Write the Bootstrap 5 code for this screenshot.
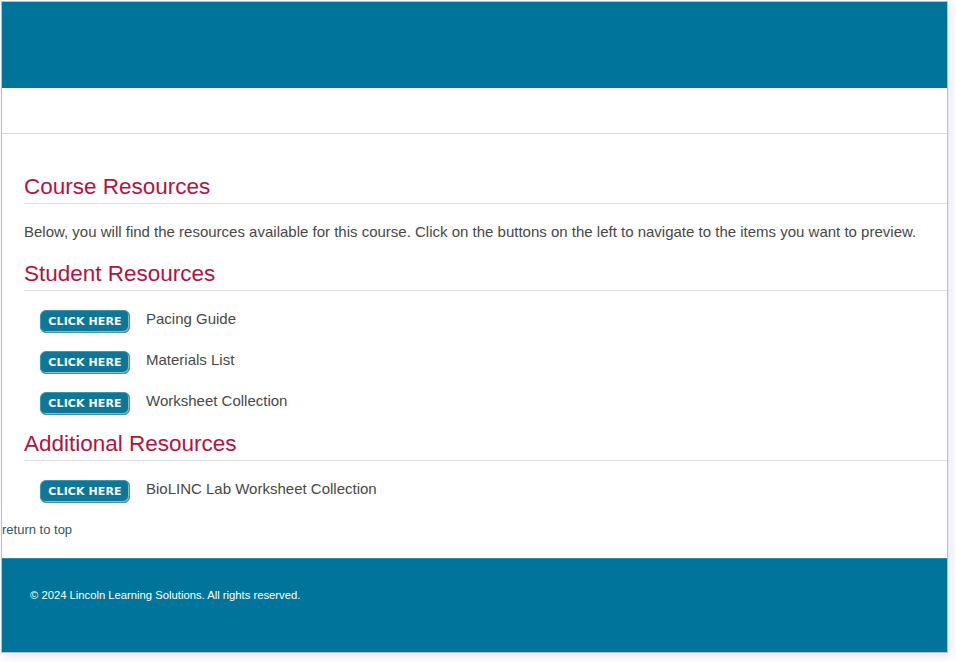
<!DOCTYPE html>
<html lang="en">
<head>
<meta charset="utf-8">
<title>Course Resources</title>
<link rel="stylesheet" href="https://cdn.jsdelivr.net/npm/bootstrap@5.3.0/dist/css/bootstrap.min.css">
<style>
html,body{height:100%;background:#fff;overflow:hidden}
body{font-family:"Liberation Sans",Arial,sans-serif;color:#484848;font-size:15px;padding:1px 0 0 1px}
.frame{width:947px;height:652px;border:1px solid #bdbdc4;box-shadow:3px 3px 10px rgba(170,165,225,.3);display:flex;flex-direction:column;background:#fff}
.topband{height:86px;background:#00749a;flex:none}
.subbar{height:46px;border-bottom:1px solid #d9d9d9;flex:none}
.content{flex:1 1 auto;padding:39px 0 0 0}
.sect{margin:0 0 0 22px}
.sect-title{color:#b5123f;font-family:"Liberation Sans",Arial,sans-serif;font-size:22.5px;line-height:27px;font-weight:400;margin:0;padding-bottom:3px;border-bottom:1px solid #dedede}
.intro{margin:17px 0 0;line-height:21px;font-size:15px;white-space:nowrap}
.sect-student{margin-top:18px;margin-bottom:-1px}
.rowlist{margin-top:17px}
.rowitem{display:flex;align-items:flex-start;margin-left:16px;height:41px}
.label-text{line-height:21px;margin-left:16px}
.clickbtn{display:flex;align-items:center;justify-content:center;width:90px;height:23px;margin-top:2px;padding-bottom:1px;background:#0e7696;border-radius:6px;border:1px solid #3f93ad;box-shadow:inset -1px -1px 0 #86bccd;color:#f4f9fb;font-family:"DejaVu Sans",sans-serif;font-weight:700;font-size:11px;letter-spacing:.1px;text-decoration:none;line-height:1;white-space:nowrap}
.retlink{color:#2f5568;font-size:13px;line-height:18px;text-decoration:none;display:block;margin-top:2px}
.footband{height:94px;background:#00749a;flex:none;color:#fff;font-size:11.25px;padding:28px 0 0 28px;line-height:16px;border-top:1px solid #2a8aa8}
</style>
</head>
<body>
<div class="frame">
  <div class="topband"></div>
  <div class="subbar"></div>
  <div class="content">
    <section class="sect">
      <h2 class="sect-title">Course Resources</h2>
      <p class="intro">Below, you will find the resources available for this course. Click on the buttons on the left to navigate to the items you want to preview.</p>
    </section>
    <section class="sect sect-student">
      <h2 class="sect-title">Student Resources</h2>
      <div class="rowlist">
        <div class="rowitem"><a class="clickbtn" href="#">CLICK HERE</a><span class="label-text">Pacing Guide</span></div>
        <div class="rowitem"><a class="clickbtn" href="#">CLICK HERE</a><span class="label-text">Materials List</span></div>
        <div class="rowitem"><a class="clickbtn" href="#">CLICK HERE</a><span class="label-text">Worksheet Collection</span></div>
      </div>
    </section>
    <section class="sect">
      <h2 class="sect-title">Additional Resources</h2>
      <div class="rowlist">
        <div class="rowitem"><a class="clickbtn" href="#">CLICK HERE</a><span class="label-text">BioLINC Lab Worksheet Collection</span></div>
      </div>
    </section>
    <a class="retlink" href="#">return to top</a>
  </div>
  <footer class="footband">© 2024 Lincoln Learning Solutions. All rights reserved.</footer>
</div>
<script src="https://cdn.jsdelivr.net/npm/bootstrap@5.3.0/dist/js/bootstrap.bundle.min.js"></script>
</body>
</html>
